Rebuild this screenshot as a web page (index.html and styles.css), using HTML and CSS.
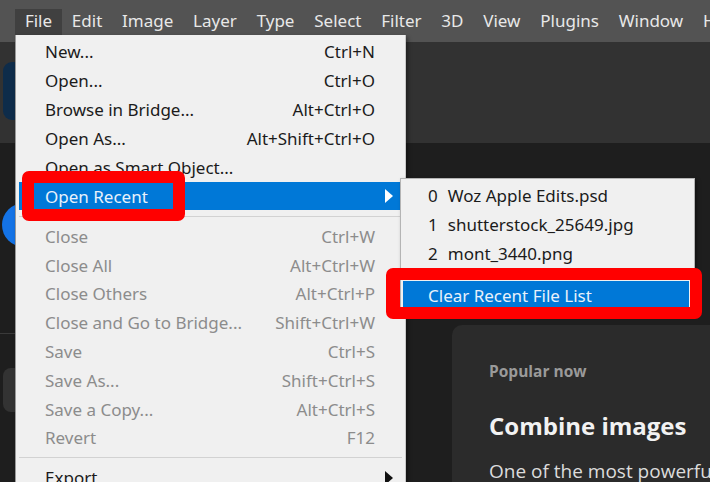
FILE: index.html
```html
<!DOCTYPE html>
<html lang="en">
<head>
<meta charset="utf-8">
<title>Photoshop File menu</title>
<link rel="stylesheet" href="styles.css">
</head>
<body>
<div class="app">
  <nav class="menubar">
    <span class="mb-item active">File</span>
    <span class="mb-item">Edit</span>
    <span class="mb-item">Image</span>
    <span class="mb-item">Layer</span>
    <span class="mb-item">Type</span>
    <span class="mb-item">Select</span>
    <span class="mb-item">Filter</span>
    <span class="mb-item">3D</span>
    <span class="mb-item">View</span>
    <span class="mb-item">Plugins</span>
    <span class="mb-item">Window</span>
    <span class="mb-item">Help</span>
  </nav>
  <div class="workspace">
    <div class="banner">
      <div class="navy-btn"></div>
    </div>
    <div class="content">
      <aside class="sidebar">
        <div class="avatar"></div>
        <div class="side-sep"></div>
        <div class="side-item"></div>
      </aside>
      <section class="main">
        <div class="card">
          <div class="card-kicker">Popular now</div>
          <h2 class="card-title">Combine images</h2>
          <p class="card-text">One of the most powerful features of Photoshop</p>
        </div>
      </section>
    </div>
  </div>

  <div class="menu file-menu">
    <div class="row"><span>New...</span><span class="sc">Ctrl+N</span></div>
    <div class="row"><span>Open...</span><span class="sc">Ctrl+O</span></div>
    <div class="row"><span>Browse in Bridge...</span><span class="sc">Alt+Ctrl+O</span></div>
    <div class="row"><span>Open As...</span><span class="sc">Alt+Shift+Ctrl+O</span></div>
    <div class="row"><span>Open as Smart Object...</span><span class="sc"></span></div>
    <div class="row hl"><span>Open Recent</span><span class="arrow white"></span></div>
    <div class="sep"></div>
    <div class="row dis"><span>Close</span><span class="sc">Ctrl+W</span></div>
    <div class="row dis"><span>Close All</span><span class="sc">Alt+Ctrl+W</span></div>
    <div class="row dis"><span>Close Others</span><span class="sc">Alt+Ctrl+P</span></div>
    <div class="row dis"><span>Close and Go to Bridge...</span><span class="sc">Shift+Ctrl+W</span></div>
    <div class="row dis"><span>Save</span><span class="sc">Ctrl+S</span></div>
    <div class="row dis"><span>Save As...</span><span class="sc">Shift+Ctrl+S</span></div>
    <div class="row dis"><span>Save a Copy...</span><span class="sc">Alt+Ctrl+S</span></div>
    <div class="row dis"><span>Revert</span><span class="sc">F12</span></div>
    <div class="sep"></div>
    <div class="row"><span>Export</span><span class="arrow"></span></div>
  </div>

  <div class="menu sub-menu">
    <div class="srow"><span class="num">0</span><span>Woz Apple Edits.psd</span></div>
    <div class="srow"><span class="num">1</span><span>shutterstock_25649.jpg</span></div>
    <div class="srow"><span class="num">2</span><span>mont_3440.png</span></div>
    <div class="ssep"></div>
    <div class="srow hl"><span>Clear Recent File List</span></div>
  </div>

  <div class="callout callout-recent"></div>
  <div class="callout callout-clear"></div>
</div>
</body>
</html>
```

FILE: styles.css
```css
* { box-sizing: border-box; margin: 0; padding: 0; }

html, body {
  width: 710px;
  height: 482px;
  overflow: hidden;
  background: #1e1e1e;
}

body {
  font-family: "Noto Sans", "Open Sans", sans-serif;
}

.app {
  position: relative;
  width: 710px;
  height: 482px;
  display: flex;
  flex-direction: column;
  overflow: hidden;
}

/* ---------- menubar ---------- */
.menubar {
  height: 42px;
  flex: none;
  background: #535353;
  display: flex;
  align-items: flex-start;
  padding: 9px 0 0 15px;
  white-space: nowrap;
  overflow: hidden;
}

.mb-item {
  height: 26px;
  line-height: 24px;
  padding: 0 9.9px;
  font-size: 17px;
  color: #e8e8e8;
}

.mb-item.active {
  background: #404040;
}

/* ---------- workspace ---------- */
.workspace {
  flex: 1;
  display: flex;
  flex-direction: column;
  min-height: 0;
}

.banner {
  height: 101px;
  flex: none;
  background: #323232;
  padding: 20px 0 0 3px;
}

.navy-btn {
  width: 180px;
  height: 58px;
  border-radius: 9px;
  background: #0e2c4a;
}

.content {
  flex: 1;
  display: flex;
  min-height: 0;
}

.sidebar {
  width: 240px;
  flex: none;
  padding: 60px 0 0 2px;
  display: flex;
  flex-direction: column;
}

.avatar {
  width: 44px;
  height: 44px;
  border-radius: 50%;
  background: #1473e6;
}

.side-sep {
  height: 1px;
  background: #3a3a3a;
  margin: 86px 0 0 -2px;
}

.side-item {
  width: 200px;
  height: 44px;
  margin: 34px 0 0 1px;
  border-radius: 8px;
  background: #333333;
}

.main {
  flex: 1;
  padding: 182px 0 0 212px;
  overflow: hidden;
}

.card {
  width: 400px;
  height: 300px;
  background: #2b2b2b;
  border-radius: 10px;
  padding: 36px 0 0 37px;
  font-family: "Open Sans", "Noto Sans", sans-serif;
  white-space: nowrap;
}

.card-kicker {
  font-size: 15.5px;
  font-weight: 700;
  color: #9a9a9a;
  line-height: 20px;
}

.card-title {
  margin-top: 29px;
  font-size: 24px;
  font-weight: 700;
  color: #f2f2f2;
  line-height: 32px;
}

.card-text {
  margin-top: 16px;
  font-size: 19px;
  color: #dcdcdc;
  line-height: 26px;
}

/* ---------- dropdown menus ---------- */
.menu {
  position: absolute;
  background: #f0f0f0;
  font-size: 17px;
  color: #1b1b1b;
  white-space: nowrap;
}

.file-menu {
  left: 15px;
  top: 35px;
  width: 391px;
  height: 460px;
  padding: 2px 3px;
  border-left: 1px solid #9a9a9a;
  border-right: 1px solid #c8c8c8;
  box-shadow: 2px 2px 4px rgba(0,0,0,0.4);
}

.row {
  height: 29px;
  display: flex;
  align-items: center;
  justify-content: space-between;
  padding: 0 27px 0 26px;
}

.row.hl {
  background: #0078d7;
  color: #e8f1fb;
  height: 28px;
  margin-bottom: 1px;
}

.row.dis {
  color: #8c8c8c;
  height: 28.8px;
}

.sep {
  height: 11px;
  display: flex;
  align-items: center;
}

.sep::before {
  content: "";
  flex: 1;
  height: 1px;
  background: #d2d2d2;
}

.arrow {
  width: 0;
  height: 0;
  border-left: 8px solid #111;
  border-top: 7px solid transparent;
  border-bottom: 7px solid transparent;
  margin-right: -18px;
}

.arrow.white {
  border-left-color: #ffffff;
}

.sub-menu {
  left: 400px;
  top: 178px;
  width: 295px;
  padding: 2px 5px 2px 2px;
  border: 1px solid #b4b4b4;
  box-shadow: 2px 2px 4px rgba(0,0,0,0.4);
}

.srow {
  height: 29px;
  display: flex;
  align-items: center;
  gap: 10px;
  padding-left: 25px;
}

.srow.hl {
  background: #0078d7;
  color: #e8f1fb;
}

.ssep {
  height: 13px;
}

/* ---------- red callouts ---------- */
.callout {
  position: absolute;
  border: 12px solid #ff0000;
  border-radius: 7px;
}

.callout-recent {
  left: 22px;
  top: 171px;
  width: 163px;
  height: 50px;
}

.callout-clear {
  left: 386px;
  top: 268px;
  width: 316px;
  height: 51px;
  border-width: 12px 12px 12px 14px;
}
```
